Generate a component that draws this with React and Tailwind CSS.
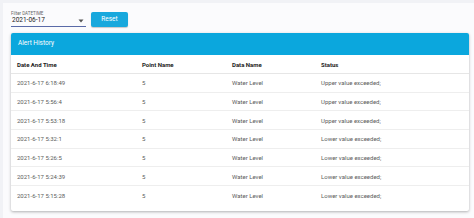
import React from 'react';

const rows = [
  ['2021-6-17 6:18:49', '5', 'Water Level', 'Upper value exceeded;'],
  ['2021-6-17 5:56:4', '5', 'Water Level', 'Upper value exceeded;'],
  ['2021-6-17 5:53:18', '5', 'Water Level', 'Upper value exceeded;'],
  ['2021-6-17 5:32:1', '5', 'Water Level', 'Lower value exceeded;'],
  ['2021-6-17 5:26:5', '5', 'Water Level', 'Lower value exceeded;'],
  ['2021-6-17 5:24:39', '5', 'Water Level', 'Lower value exceeded;'],
  ['2021-6-17 5:15:28', '5', 'Water Level', 'Lower value exceeded;'],
];

export default function App(){
  return (
    <div className="w-[474px] h-[218px] bg-[#f1f2f6] pt-[3px] pl-[3px] overflow-hidden" style={{fontFamily:'Roboto, "Liberation Sans", sans-serif'}}>
      <div className="bg-[#fbfbfd] h-full pl-[8px] pt-[7px]">
        <div className="flex items-start gap-[5px]">
          <div className="w-[75px]">
            <div className="text-[4.5px] leading-[5px] text-[#666] mt-[1px]">Filter DATETIME</div>
            <div className="flex items-center justify-between h-[11px] border-b border-[#5a6aa8] pl-[1px] pr-[2px]">
              <span className="text-[6.5px] text-[#222]">2021-06-17</span>
              <svg width="6" height="4" viewBox="0 0 6 4"><path d="M0.5 0.5 L5.5 0.5 L3 3.5 Z" fill="#555" /></svg>
            </div>
          </div>
          <button className="mt-[2px] w-[37px] h-[15px] bg-[#18a8dd] text-white text-[6.5px] rounded-[2px] shadow-[0_1px_1px_rgba(0,0,0,0.2)]">Reset</button>
        </div>
        <div className="mt-[6px] w-[458px] bg-white shadow-[0_1px_3px_rgba(0,0,0,0.3)] rounded-[2px] pb-[6px]">
          <div className="h-[22px] bg-[#0ba7dd] rounded-t-[2px] flex items-center pl-[7px] text-white text-[6.5px]">Alert History</div>
          <div className="flex h-[19px] items-center border-b border-[#e6e6e6] text-[6px] font-bold text-[#222] pl-[6px]">
            <div className="w-[125px]">Date And Time</div>
            <div className="w-[90px]">Point Name</div>
            <div className="w-[89px]">Data Name</div>
            <div>Status</div>
          </div>
          {rows.map((r, i) => (
            <div key={i} className={`flex h-[18.7px] items-center text-[6px] text-[#5c5c5c] pl-[6px] ${i < rows.length - 1 ? 'border-b border-[#eeeeee]' : ''}`}>
              <div className="w-[125px]">{r[0]}</div>
              <div className="w-[90px]">{r[1]}</div>
              <div className="w-[89px]">{r[2]}</div>
              <div>{r[3]}</div>
            </div>
          ))}
        </div>
      </div>
    </div>
  );
}
